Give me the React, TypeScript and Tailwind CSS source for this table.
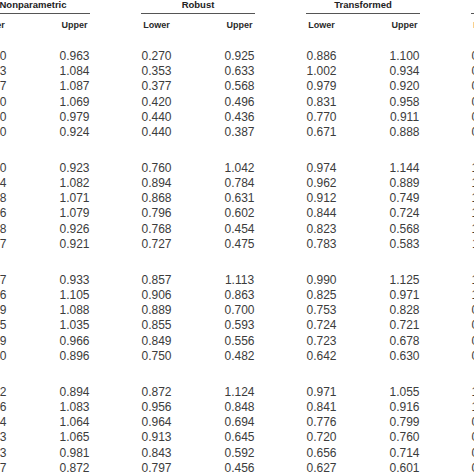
const groups = [
  {
    title: "Nonparametric",
    lower: [
      ["0.710", "0.803", "0.807", "0.750", "0.730", "0.690"],
      ["0.760", "0.884", "0.868", "0.786", "0.778", "0.717"],
      ["0.847", "0.906", "0.879", "0.845", "0.829", "0.740"],
      ["0.862", "0.946", "0.934", "0.903", "0.833", "0.787"],
    ],
    upper: [
      ["0.963", "1.084", "1.087", "1.069", "0.979", "0.924"],
      ["0.923", "1.082", "1.071", "1.079", "0.926", "0.921"],
      ["0.933", "1.105", "1.088", "1.035", "0.966", "0.896"],
      ["0.894", "1.083", "1.064", "1.065", "0.981", "0.872"],
    ],
  },
  {
    title: "Robust",
    lower: [
      ["0.270", "0.353", "0.377", "0.420", "0.440", "0.440"],
      ["0.760", "0.894", "0.868", "0.796", "0.768", "0.727"],
      ["0.857", "0.906", "0.889", "0.855", "0.849", "0.750"],
      ["0.872", "0.956", "0.964", "0.913", "0.843", "0.797"],
    ],
    upper: [
      ["0.925", "0.633", "0.568", "0.496", "0.436", "0.387"],
      ["1.042", "0.784", "0.631", "0.602", "0.454", "0.475"],
      ["1.113", "0.863", "0.700", "0.593", "0.556", "0.482"],
      ["1.124", "0.848", "0.694", "0.645", "0.592", "0.456"],
    ],
  },
  {
    title: "Transformed",
    lower: [
      ["0.886", "1.002", "0.979", "0.831", "0.770", "0.671"],
      ["0.974", "0.962", "0.912", "0.844", "0.823", "0.783"],
      ["0.990", "0.825", "0.753", "0.724", "0.723", "0.642"],
      ["0.971", "0.841", "0.776", "0.720", "0.656", "0.627"],
    ],
    upper: [
      ["1.100", "0.934", "0.920", "0.958", "0.911", "0.888"],
      ["1.144", "0.889", "0.749", "0.724", "0.568", "0.583"],
      ["1.125", "0.971", "0.828", "0.721", "0.678", "0.630"],
      ["1.055", "0.916", "0.799", "0.760", "0.714", "0.601"],
    ],
  },
  {
    title: "Parametric",
    lower: [
      ["0.902", "0.941", "0.930", "0.874", "0.821", "0.755"],
      ["1.021", "1.004", "1.012", "1.008", "1.015", "1.011"],
      ["1.032", "1.018", "0.962", "0.913", "0.905", "0.874"],
      ["1.006", "1.001", "0.951", "0.902", "0.871", "0.822"],
    ],
    upper: [
      ["1.120", "1.002", "0.984", "0.976", "0.942", "0.917"],
      ["1.181", "0.963", "0.842", "0.801", "0.706", "0.690"],
      ["1.164", "1.032", "0.902", "0.812", "0.774", "0.721"],
      ["1.098", "0.982", "0.870", "0.833", "0.790", "0.705"],
    ],
  },
];

function Group({ g }: { g: (typeof groups)[number] }) {
  return (
    <div className="flex w-[114px] shrink-0 flex-col">
      <div className="h-[14px] border-b border-[#555] text-center text-[9.5px] font-bold leading-[10px] whitespace-nowrap text-[#222]">
        {g.title}
      </div>
      <div className="mt-[6px] flex justify-between text-[9px] font-bold leading-[10px] text-[#2a2a2a]">
        <span className="w-[31px] text-center">Lower</span>
        <span className="w-[31px] text-center">Upper</span>
      </div>
      <div className="mt-[18.4px] flex flex-col gap-[20.8px]">
        {g.lower.map((block, b) => (
          <div key={b} className="flex flex-col">
            {block.map((lo, r) => (
              <div
                key={r}
                className="flex h-[15.2px] items-center justify-between text-[12px] text-[#3c3c3c]"
              >
                <span className="w-[31px] text-center">{lo}</span>
                <span className="w-[31px] text-center">{g.upper[b][r]}</span>
              </div>
            ))}
          </div>
        ))}
      </div>
    </div>
  );
}

export default function App() {
  return (
    <div
      className="h-[474px] w-[474px] overflow-hidden bg-white"
      style={{ fontFamily: '"Liberation Sans", Arial, sans-serif' }}
    >
      <div className="-ml-[24px] flex gap-[51px]">
        {groups.map((g) => (
          <Group key={g.title} g={g} />
        ))}
      </div>
    </div>
  );
}
